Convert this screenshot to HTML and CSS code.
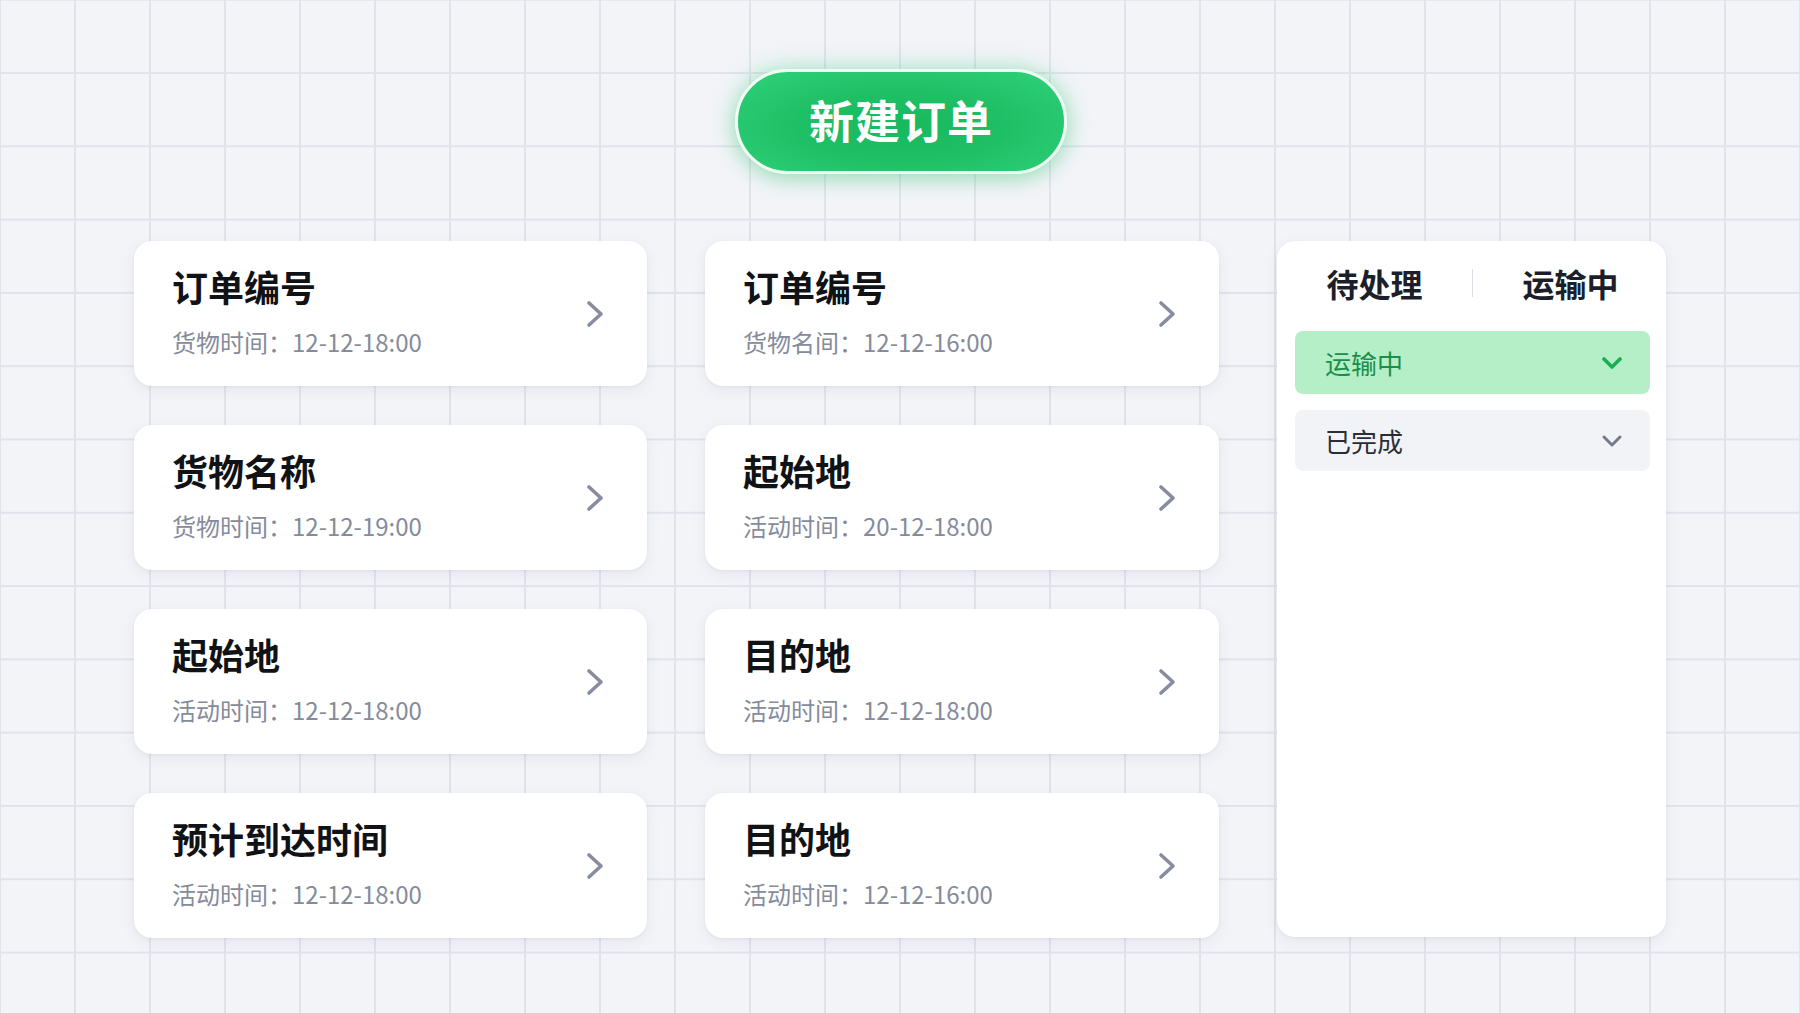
FILE: index.html
```html
<!DOCTYPE html>
<html lang="zh-CN">
<head>
<meta charset="utf-8">
<title>订单</title>
<link rel="stylesheet" href="styles.css">
</head>
<body>
<div class="page">
  <div class="top">
    <button class="new-btn">新建订单</button>
  </div>
  <div class="board">
    <div class="col">
      <div class="card"><div class="info"><div class="title">订单编号</div><div class="sub">货物时间：12-12-18:00</div></div><svg class="chev" viewBox="0 0 20 28"><polyline points="4,3 16,14 4,25"/></svg></div>
      <div class="card"><div class="info"><div class="title">货物名称</div><div class="sub">货物时间：12-12-19:00</div></div><svg class="chev" viewBox="0 0 20 28"><polyline points="4,3 16,14 4,25"/></svg></div>
      <div class="card"><div class="info"><div class="title">起始地</div><div class="sub">活动时间：12-12-18:00</div></div><svg class="chev" viewBox="0 0 20 28"><polyline points="4,3 16,14 4,25"/></svg></div>
      <div class="card"><div class="info"><div class="title">预计到达时间</div><div class="sub">活动时间：12-12-18:00</div></div><svg class="chev" viewBox="0 0 20 28"><polyline points="4,3 16,14 4,25"/></svg></div>
    </div>
    <div class="col">
      <div class="card"><div class="info"><div class="title">订单编号</div><div class="sub">货物名间：12-12-16:00</div></div><svg class="chev" viewBox="0 0 20 28"><polyline points="4,3 16,14 4,25"/></svg></div>
      <div class="card"><div class="info"><div class="title">起始地</div><div class="sub">活动时间：20-12-18:00</div></div><svg class="chev" viewBox="0 0 20 28"><polyline points="4,3 16,14 4,25"/></svg></div>
      <div class="card"><div class="info"><div class="title">目的地</div><div class="sub">活动时间：12-12-18:00</div></div><svg class="chev" viewBox="0 0 20 28"><polyline points="4,3 16,14 4,25"/></svg></div>
      <div class="card"><div class="info"><div class="title">目的地</div><div class="sub">活动时间：12-12-16:00</div></div><svg class="chev" viewBox="0 0 20 28"><polyline points="4,3 16,14 4,25"/></svg></div>
    </div>
    <div class="panel">
      <div class="tabs">
        <div class="tab tab-left">待处理</div>
        <div class="divider"></div>
        <div class="tab tab-right">运输中</div>
      </div>
      <div class="opt opt-active"><span>运输中</span><svg class="down" viewBox="0 0 20 12"><polyline points="2,2 10,10 18,2"/></svg></div>
      <div class="opt"><span>已完成</span><svg class="down" viewBox="0 0 20 12"><polyline points="2,2 10,10 18,2"/></svg></div>
    </div>
  </div>
</div>
</body>
</html>
```
FILE: styles.css
```css
html, body {
  margin: 0;
  padding: 0;
}
body {
  width: 1800px;
  height: 1013px;
  overflow: hidden;
  font-family: "Noto Sans CJK SC", "Noto Sans", sans-serif;
  background-color: #f3f4f8;
  background-image:
    linear-gradient(to right, #e0e3eb 2px, transparent 2px),
    linear-gradient(to bottom, #e0e3eb 2px, transparent 2px);
  background-size: 75px 100%, 100% 73.3px;
  background-position: -1px 0, 0 -1.3px;
}
.page {
  padding-top: 69px;
}
.top {
  display: flex;
  justify-content: center;
}
.new-btn {
  width: 332px;
  height: 105px;
  border-radius: 53px;
  border: 3px solid #eefcf3;
  background: radial-gradient(ellipse at 50% 55%, #18b85e 0%, #1fbf65 45%, #2fd27b 100%);
  color: #fff;
  font-family: "Noto Sans CJK SC", sans-serif;
  font-size: 45px;
  font-weight: 700;
  letter-spacing: 1px;
  line-height: 1;
  box-shadow: 0 0 26px rgba(40, 205, 115, 0.35), 0 6px 18px rgba(30, 170, 90, 0.2);
  padding: 0 0 4px 0;
  margin-left: 2px;
}
.board {
  margin-top: 67px;
  display: grid;
  grid-template-columns: 513px 514px 389px;
  column-gap: 58px;
  justify-content: center;
}
.col {
  display: flex;
  flex-direction: column;
  gap: 39px;
}
.card {
  height: 145px;
  box-sizing: border-box;
  background: #fff;
  border-radius: 18px;
  box-shadow: 0 4px 14px rgba(40, 50, 80, 0.07), 0 1px 3px rgba(40, 50, 80, 0.05);
  display: flex;
  align-items: center;
  justify-content: space-between;
  padding: 0 42px 0 38px;
}
.info {
  align-self: flex-start;
  padding-top: 26px;
}
.title {
  font-size: 36px;
  line-height: 38px;
  font-weight: 700;
  color: #111216;
}
.sub {
  margin-top: 22px;
  font-size: 24px;
  line-height: 30px;
  color: #868b9b;
  white-space: nowrap;
}
.chev {
  width: 20px;
  height: 28px;
  fill: none;
  stroke: #878ca1;
  stroke-width: 3.6;
  stroke-linecap: round;
  stroke-linejoin: round;
}
.panel {
  height: 696px;
  box-sizing: border-box;
  background: #fff;
  border-radius: 18px;
  box-shadow: 0 4px 14px rgba(40, 50, 80, 0.07), 0 1px 3px rgba(40, 50, 80, 0.05);
  padding: 17px 16px 17px 18px;
  display: flex;
  flex-direction: column;
}
.tabs {
  height: 50px;
  display: grid;
  grid-template-columns: 1fr 1px 1fr;
  align-items: center;
  margin-bottom: 23px;
}
.tab {
  text-align: center;
  font-size: 32px;
  font-weight: 700;
  color: #1c1f2a;
  line-height: 40px;
}
.tab-left {
  padding-right: 18px;
}
.tab-right {
  padding-left: 18px;
}
.divider {
  width: 1px;
  height: 28px;
  background: #dcdfe6;
}
.opt {
  height: 61px;
  box-sizing: border-box;
  border-radius: 8px;
  background: #f2f3f6;
  display: flex;
  align-items: center;
  justify-content: space-between;
  padding: 0 28px 0 30px;
  font-size: 26px;
  color: #2a2d37;
  margin-top: 16px;
}
.opt-active {
  height: 63px;
  margin-top: 0;
  background: #b4efc8;
  color: #1b8e4b;
}
.down {
  width: 20px;
  height: 12px;
  fill: none;
  stroke: #757a8c;
  stroke-width: 3;
  stroke-linecap: round;
  stroke-linejoin: round;
}
.opt-active .down {
  stroke: #1aae57;
  stroke-width: 3.6;
}
```
